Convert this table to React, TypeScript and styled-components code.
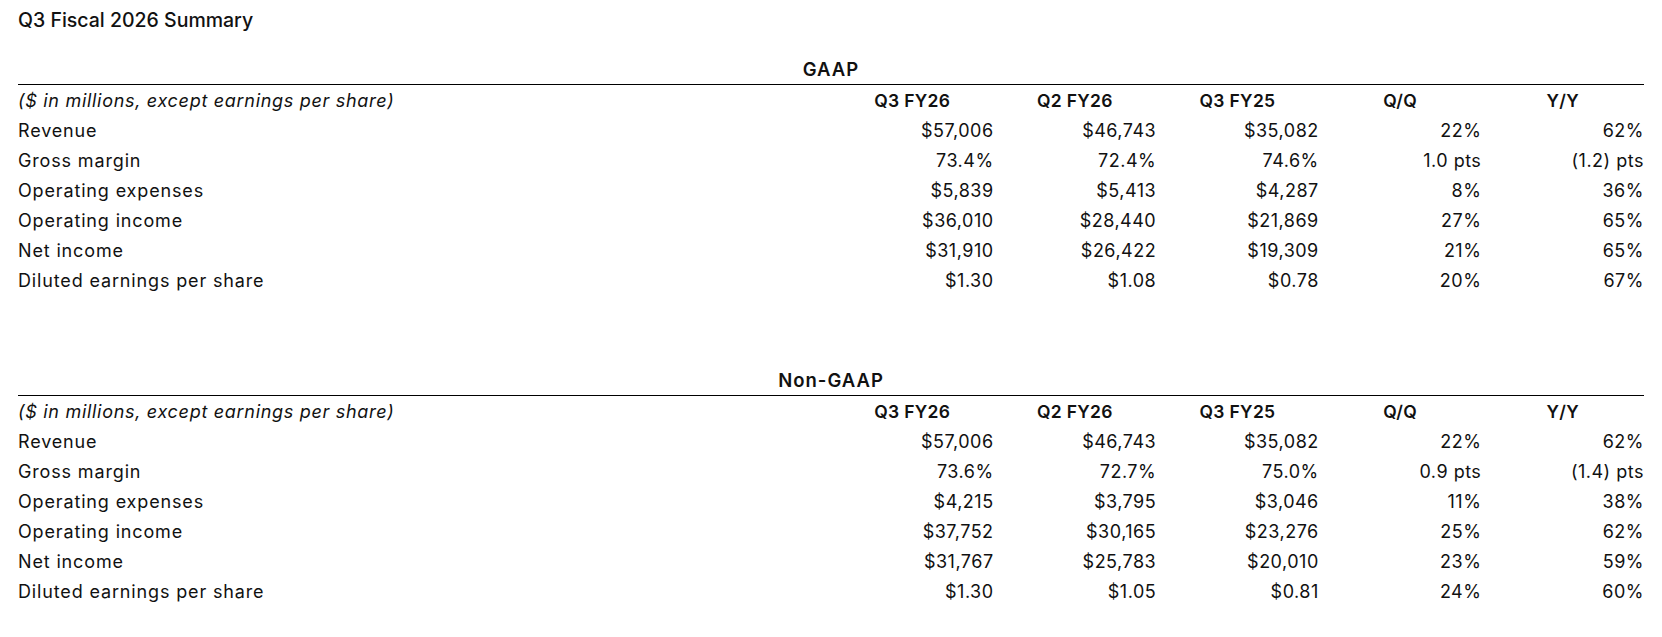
import React from "react";
import styled, { createGlobalStyle } from "styled-components";

const GlobalStyle = createGlobalStyle`
  html, body { margin: 0; padding: 0; background: #fff; }
  body { font-family: Inter, "Noto Sans", sans-serif; color: #111; }
`;

const Page = styled.div`
  padding: 0 18px 0 18px;
  width: 1662px;
  box-sizing: border-box;
`;

const Title = styled.h1`
  margin: 0;
  height: 40px;
  display: flex;
  align-items: center;
  font-size: 19.5px;
  font-weight: 500;
  letter-spacing: 0;
`;

const Section = styled.section<{ $gap: number }>`
  margin-top: ${(p) => p.$gap}px;
`;

const Caption = styled.div`
  height: 30px;
  border-bottom: 1px solid #000;
  display: flex;
  align-items: center;
  justify-content: center;
  font-size: 18.5px;
  font-weight: 600;
  letter-spacing: 1px;
`;

const Row = styled.div`
  display: grid;
  grid-template-columns: 50% repeat(5, 10%);
  height: 30px;
  align-items: center;
  font-size: 18px;
  letter-spacing: 0.5px;
`;

const Label = styled.div<{ $italic?: boolean }>`
  font-style: ${(p) => (p.$italic ? "italic" : "normal")};
  letter-spacing: ${(p) => (p.$italic ? "0.7px" : "0.85px")};
  white-space: nowrap;
`;

const HeadCell = styled.div`
  text-align: center;
  font-weight: 600;
  font-size: 17.5px;
  letter-spacing: 0.3px;
`;

const Cell = styled.div`
  text-align: right;
  white-space: nowrap;
`;

const heads = ["Q3 FY26", "Q2 FY26", "Q3 FY25", "Q/Q", "Y/Y"];

type Data = [string, string[]][];

const gaap: Data = [
  ["Revenue", ["$57,006", "$46,743", "$35,082", "22%", "62%"]],
  ["Gross margin", ["73.4%", "72.4%", "74.6%", "1.0 pts", "(1.2) pts"]],
  ["Operating expenses", ["$5,839", "$5,413", "$4,287", "8%", "36%"]],
  ["Operating income", ["$36,010", "$28,440", "$21,869", "27%", "65%"]],
  ["Net income", ["$31,910", "$26,422", "$19,309", "21%", "65%"]],
  ["Diluted earnings per share", ["$1.30", "$1.08", "$0.78", "20%", "67%"]],
];

const nonGaap: Data = [
  ["Revenue", ["$57,006", "$46,743", "$35,082", "22%", "62%"]],
  ["Gross margin", ["73.6%", "72.7%", "75.0%", "0.9 pts", "(1.4) pts"]],
  ["Operating expenses", ["$4,215", "$3,795", "$3,046", "11%", "38%"]],
  ["Operating income", ["$37,752", "$30,165", "$23,276", "25%", "62%"]],
  ["Net income", ["$31,767", "$25,783", "$20,010", "23%", "59%"]],
  ["Diluted earnings per share", ["$1.30", "$1.05", "$0.81", "24%", "60%"]],
];

function Table({ caption, data, gap }: { caption: string; data: Data; gap: number }) {
  return (
    <Section $gap={gap}>
      <Caption>{caption}</Caption>
      <Row>
        <Label $italic>($ in millions, except earnings per share)</Label>
        {heads.map((h) => (
          <HeadCell key={h}>{h}</HeadCell>
        ))}
      </Row>
      {data.map(([label, vals]) => (
        <Row key={label}>
          <Label>{label}</Label>
          {vals.map((v, i) => (
            <Cell key={i}>{v}</Cell>
          ))}
        </Row>
      ))}
    </Section>
  );
}

export default function App() {
  return (
    <>
      <GlobalStyle />
      <Page>
        <Title>Q3 Fiscal 2026 Summary</Title>
        <Table caption="GAAP" data={gaap} gap={14} />
        <Table caption="Non-GAAP" data={nonGaap} gap={70} />
      </Page>
    </>
  );
}
